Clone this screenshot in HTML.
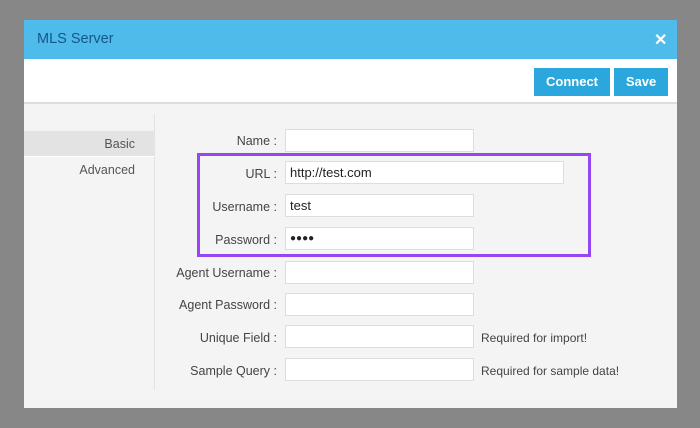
<!DOCTYPE html>
<html><head><style>
*{margin:0;padding:0;box-sizing:border-box}
body{width:700px;height:428px;background:#878787;position:relative;font-family:"Liberation Sans",sans-serif;overflow:hidden}
.dlg{position:absolute;left:24px;top:20px;width:653px;height:388px;background:#f4f4f4}
.hdr{position:absolute;left:0;top:0;width:653px;height:39px;background:#4fbbeb}
.hdr .t{position:absolute;left:13px;top:11px;font-size:14.5px;color:#17568a}
.hdr .x{position:absolute;left:630px;top:10px;font-size:16px;font-weight:bold;color:#fff}
.bar{position:absolute;left:0;top:39px;width:653px;height:45px;background:#fff;border-bottom:2px solid #ddd}
.btn{position:absolute;top:9px;height:28px;background:#2ba7dd;color:#fff;font-weight:bold;font-size:13px;text-align:center;line-height:28px}
.side{position:absolute;left:0;top:94px;width:131px;height:276px;border-right:1px solid #e2e2e2}
.sel{position:absolute;left:0;top:17px;width:131px;height:26px;background:#e3e3e3;border-bottom:1px solid #fff}
.sl{position:absolute;right:19px;font-size:12.5px;color:#555}
.lbl{position:absolute;width:253px;text-align:right;font-size:12.5px;color:#444}
.in{position:absolute;left:285px;width:189px;height:23px;background:#fff;border:1px solid #ddd;font-size:13px;color:#222;padding:3px 4px}
.note{position:absolute;left:481px;font-size:12px;color:#444}
.box{position:absolute;left:197px;top:153px;width:394px;height:104px;border:3px solid #9447f2}
</style></head><body>
<div class="dlg">
<div class="hdr"><div class="t">MLS Server</div><div class="x">✕</div></div>
<div class="bar"><div class="btn" style="left:510px;width:76px">Connect</div><div class="btn" style="left:590px;width:54px">Save</div></div>
<div class="side"><div class="sel"></div><div class="sl" style="top:23px">Basic</div><div class="sl" style="top:49px">Advanced</div></div>
</div>
<div class="lbl" style="top:134px;left:24px">Name :</div><div class="in" style="top:129px"></div>
<div class="lbl" style="top:167px;left:24px">URL :</div><div class="in" style="top:161px;width:279px">http://test.com</div>
<div class="lbl" style="top:200px;left:24px">Username :</div><div class="in" style="top:194px">test</div>
<div class="lbl" style="top:233px;left:24px">Password :</div><div class="in" style="top:227px;font-size:10px;padding-top:5px">●●●●</div>
<div class="lbl" style="top:266px;left:24px">Agent Username :</div><div class="in" style="top:261px"></div>
<div class="lbl" style="top:298px;left:24px">Agent Password :</div><div class="in" style="top:293px"></div>
<div class="lbl" style="top:331px;left:24px">Unique Field :</div><div class="in" style="top:325px"></div><div class="note" style="top:331px">Required for import!</div>
<div class="lbl" style="top:364px;left:24px">Sample Query :</div><div class="in" style="top:358px"></div><div class="note" style="top:364px">Required for sample data!</div>
<div class="box"></div>
</body></html>
